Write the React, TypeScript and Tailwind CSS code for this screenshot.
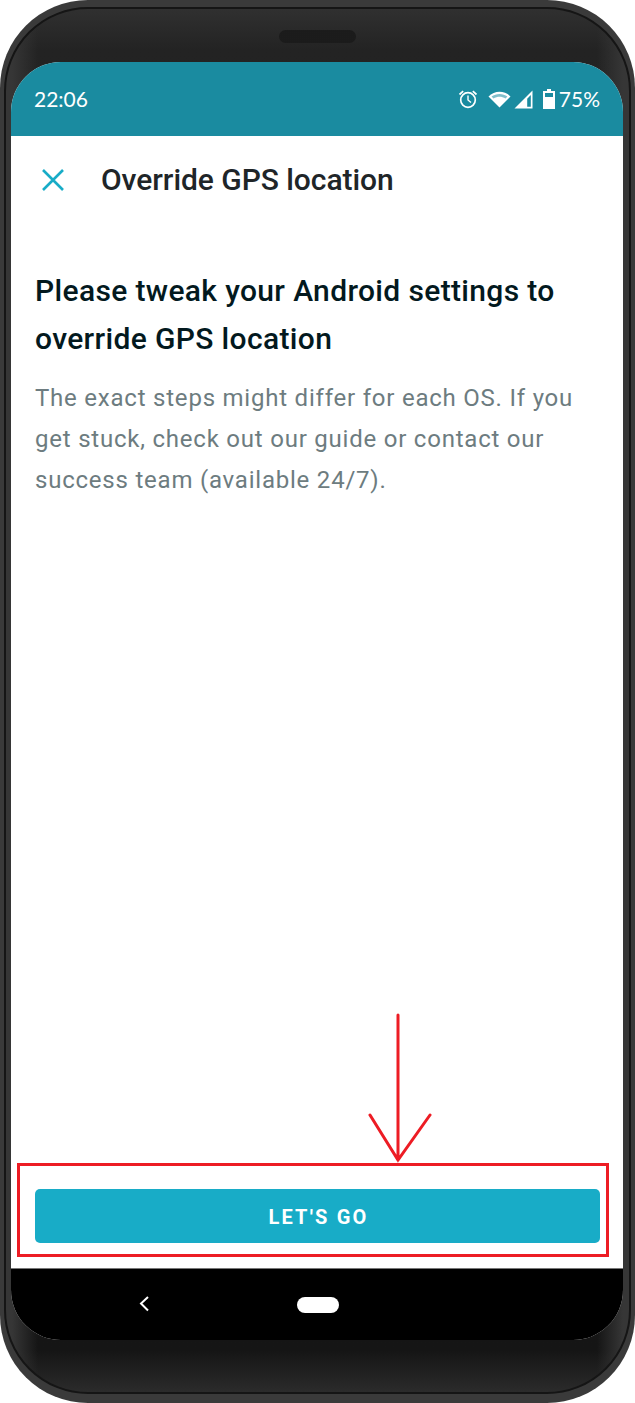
import React from "react";

function StatusIcons() {
  return (
    <div className="flex items-center text-white">
      <svg width="20" height="20" viewBox="0 0 20 20" fill="none" stroke="white" className="mr-[10px]">
        <circle cx="10" cy="11" r="7.3" strokeWidth="1.7" />
        <path d="M10 6.5V11L13 13.5" strokeWidth="1.4" />
        <path d="M1.5 5.5L5.2 2.2M18.5 5.5L14.8 2.2" strokeWidth="1.7" />
      </svg>
      <svg width="23" height="17" viewBox="0 0 23 17" className="mr-[3px]">
        <path d="M0.5 5.5C6.5 -0.8 16.5 -0.8 22.5 5.5L11.5 16.5Z" fill="white" />
        <path d="M3.6 5.6C8 2 15 2 19.4 5.6L17.6 7.6C13.5 5 9.5 5 5.4 7.6Z" fill="#1a8ba0" fillOpacity="0.55" />
      </svg>
      <svg width="19" height="19" viewBox="0 0 19 19" className="mr-[10px]">
        <path d="M18.5 0.5V18.5H0.5Z" fill="white" />
        <path d="M16.8 5V16.8H13.2V8.8Z" fill="#1a8ba0" />
      </svg>
      <svg width="12" height="20" viewBox="0 0 12 20" className="mr-[4px]">
        <path d="M4 0H8V2H12V20H0V2H4Z" fill="white" />
        <rect x="2" y="4" width="8" height="4" fill="#1a8ba0" />
      </svg>
      <span className="text-[21px] leading-none mb-[2px] [font-family:Lato,sans-serif]">75%</span>
    </div>
  );
}

export default function App() {
  return (
    <div className="w-[635px] h-[1403px] bg-white [font-family:Roboto,sans-serif]">
      <div className="relative w-[635px] h-[1403px] rounded-[88px] bg-[#3a3a3a] pt-[7px] pb-[9px] px-[4px]">
        <div className="w-full h-full rounded-[84px] border-[2px] border-[#151515] bg-[linear-gradient(to_right,#363636_0px,#363636_6px,transparent_32px,transparent_calc(100%-32px),#363636_calc(100%-6px),#363636_100%),linear-gradient(to_bottom,#303030_0%,#232323_3%,#1a1a1a_50%,#151515_97%,#2b2b2b_100%)] pt-[53px] pl-[5px]">
          <div className="w-[612px] h-[1278px] rounded-[50px] overflow-hidden flex flex-col bg-white">
            <div className="h-[74px] shrink-0 bg-[#1a8ba0] flex items-center justify-between pl-[23px] pr-[23px] text-white">
              <span className="text-[21px] leading-none mb-[2px] [font-family:Lato,sans-serif]">22:06</span>
              <StatusIcons />
            </div>
            <div className="flex-1 flex flex-col">
              <div className="h-[86px] flex items-center pl-[30px] pt-[1px]">
                <svg width="24" height="24" viewBox="0 0 24 24" fill="none" stroke="#18acc7" strokeWidth="2.6">
                  <path d="M2 2L22 22M22 2L2 22" />
                </svg>
                <h1 className="ml-[36px] text-[30px] leading-none tracking-[-0.05px] text-[#202528] font-medium">Override GPS location</h1>
              </div>
              <div className="px-[24px] pt-[45px] flex-1">
                <h2 className="text-[30px] leading-[47.5px] font-medium tracking-[0.35px] text-[#03191e]">
                  Please tweak your Android settings to override GPS location
                </h2>
                <p className="mt-[16px] text-[24px] leading-[41px] tracking-[0.78px] text-[#6d7c80]">
                  The exact steps might differ for each OS. If you get stuck, check out our guide or contact our success team (available 24/7).
                </p>
              </div>
              <div className="pl-[24px] pr-[23px] pb-[25px]">
                <button className="w-full h-[54px] pt-[2px] pl-[2px] rounded-[5px] bg-[#18acc7] text-white text-[20px] font-bold tracking-[2.2px] [font-family:Roboto,sans-serif]">
                  LET'S GO
                </button>
              </div>
            </div>
            <div className="h-[72px] shrink-0 bg-black border-t border-[#777777] relative flex items-center justify-center">
              <svg width="12" height="18" viewBox="0 0 12 18" fill="none" stroke="white" strokeWidth="2" className="absolute left-[127px] top-[26px]">
                <path d="M10 2L3 8.5L10 15.5" />
              </svg>
              <div className="w-[42px] h-[16px] ml-[1px] rounded-full bg-white" />
            </div>
          </div>
        </div>
        <div className="absolute left-[279px] top-[30px] w-[77px] h-[13px] rounded-full bg-[#0d0d0d] bg-[radial-gradient(#2c2c2c_0.6px,transparent_0.8px)] bg-[length:2px_2px]" />
        <div className="absolute left-[17px] top-[1163px] w-[592px] h-[94px] border-[3px] border-[#ed1c24]" />
        <svg className="absolute left-[360px] top-[1010px]" width="80" height="156" viewBox="0 0 80 156" fill="none" stroke="#ed1c24" strokeWidth="3" strokeLinecap="round">
          <path d="M38 5V150M10 105L38 150L70 105" />
        </svg>
      </div>
    </div>
  );
}
